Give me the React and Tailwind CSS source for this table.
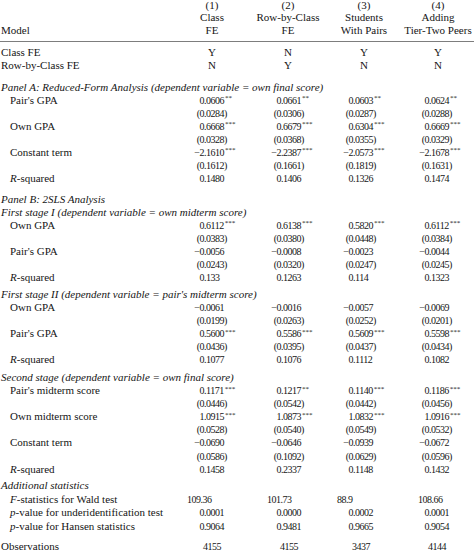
import React from "react";

const COLS = "grid grid-cols-[174px_76px_76px_76px_72px]";
const INT_W = ["w-[30px]", "w-[31px]", "w-[27px]", "w-[27px]"];
const F_PL = ["pl-[13px]", "pl-[17px]", "pl-[11px]", "pl-[16px]"];
const OBS_PL = ["pl-[29px]", "pl-[30px]", "pl-[26px]", "pl-[26px]"];

const R2 = (
  <>
    <i>R</i>-squared
  </>
);

// kind: fe = Y/N centred, num = decimal aligned, f = left padded, obs = integer
const rows = [
  { kind: "fe", label: "Class FE", vals: ["Y", "N", "Y", "Y"], top: true },
  { kind: "fe", label: "Row-by-Class FE", vals: ["N", "Y", "N", "N"], top: true },
  { sec: "Panel A: Reduced-Form Analysis (dependent variable = own final score)", mt: "mt-[8.2px]" },
  { label: "Pair's GPA", vals: ["0.0606**", "0.0661**", "0.0603**", "0.0624**"] },
  { vals: ["(0.0284)", "(0.0306)", "(0.0287)", "(0.0288)"] },
  { label: "Own GPA", vals: ["0.6668***", "0.6679***", "0.6304***", "0.6669***"] },
  { vals: ["(0.0328)", "(0.0368)", "(0.0355)", "(0.0329)"] },
  { label: "Constant term", vals: ["−2.1610***", "−2.2387***", "−2.0573***", "−2.1678***"] },
  { vals: ["(0.1612)", "(0.1661)", "(0.1819)", "(0.1631)"] },
  { label: R2, vals: ["0.1480", "0.1406", "0.1326", "0.1474"] },
  { sec: "Panel B: 2SLS Analysis", mt: "mt-[7.5px]" },
  { sec: "First stage I (dependent variable = own midterm score)" },
  { label: "Own GPA", vals: ["0.6112***", "0.6138***", "0.5820***", "0.6112***"] },
  { vals: ["(0.0383)", "(0.0380)", "(0.0448)", "(0.0384)"] },
  { label: "Pair's GPA", vals: ["−0.0056", "−0.0008", "−0.0023", "−0.0044"] },
  { vals: ["(0.0243)", "(0.0320)", "(0.0247)", "(0.0245)"] },
  { label: R2, vals: ["0.133", "0.1263", "0.114", "0.1323"] },
  { sec: "First stage II (dependent variable = pair's midterm score)", mt: "mt-[3.3px]" },
  { label: "Own GPA", vals: ["−0.0061", "−0.0016", "−0.0057", "−0.0069"] },
  { vals: ["(0.0199)", "(0.0263)", "(0.0252)", "(0.0201)"] },
  { label: "Pair's GPA", vals: ["0.5600***", "0.5586***", "0.5609***", "0.5598***"] },
  { vals: ["(0.0436)", "(0.0395)", "(0.0437)", "(0.0434)"] },
  { label: R2, vals: ["0.1077", "0.1076", "0.1112", "0.1082"] },
  { sec: "Second stage (dependent variable = own final score)", mt: "mt-[4.7px]" },
  { label: "Pair's midterm score", vals: ["0.1171***", "0.1217**", "0.1140***", "0.1186***"] },
  { vals: ["(0.0446)", "(0.0542)", "(0.0442)", "(0.0456)"] },
  { label: "Own midterm score", vals: ["1.0915***", "1.0873***", "1.0832***", "1.0916***"] },
  { vals: ["(0.0528)", "(0.0540)", "(0.0549)", "(0.0532)"] },
  { label: "Constant term", vals: ["−0.0690", "−0.0646", "−0.0939", "−0.0672"] },
  { vals: ["(0.0586)", "(0.1092)", "(0.0629)", "(0.0596)"] },
  { label: R2, vals: ["0.1458", "0.2337", "0.1148", "0.1432"] },
  { sec: "Additional statistics", mt: "mt-[3px]" },
  {
    kind: "f",
    mt: "mt-[1.5px]",
    label: (
      <>
        <i>F</i>-statistics for Wald test
      </>
    ),
    vals: ["109.36", "101.73", "88.9", "108.66"],
  },
  {
    label: (
      <>
        <i>p</i>-value for underidentification test
      </>
    ),
    vals: ["0.0001", "0.0000", "0.0002", "0.0001"],
  },
  {
    label: (
      <>
        <i>p</i>-value for Hansen statistics
      </>
    ),
    vals: ["0.9064", "0.9481", "0.9665", "0.9054"],
  },
  { kind: "obs", top: true, mt: "mt-[7px]", label: "Observations", vals: ["4155", "4155", "3437", "4144"] },
];

const headers = [
  ["(1)", "Class", "FE"],
  ["(2)", "Row-by-Class", "FE"],
  ["(3)", "Students", "With Pairs"],
  ["(4)", "Adding", "Tier-Two Peers"],
];

function Num({ v, col }) {
  const m = v.match(/^(.*?)(\*+)?$/);
  const body = m[1];
  const stars = m[2];
  const i = body.indexOf(".");
  return (
    <div className="flex whitespace-nowrap font-['Liberation_Serif',serif] text-[10px] tracking-[-0.05em]">
      <span className={`${INT_W[col]} shrink-0 text-right`}>{body.slice(0, i)}</span>
      <span>
        {body.slice(i)}
        {stars && <sup className="ml-px text-[7px] tracking-normal">{stars}</sup>}
      </span>
    </div>
  );
}

function Cell({ kind, v, col }) {
  if (kind === "fe") return <div className="text-center">{v}</div>;
  if (kind === "f" || kind === "obs") {
    const pl = kind === "f" ? F_PL[col] : OBS_PL[col];
    return (
      <div className={`${pl} whitespace-nowrap font-['Liberation_Serif',serif] text-[10px] tracking-[-0.05em]`}>
        {v}
      </div>
    );
  }
  return <Num v={v} col={col} />;
}

export default function App() {
  return (
    <div className="h-[552px] w-[474px] overflow-hidden bg-white font-['Liberation_Serif',serif] text-[11px] text-[#151515]">
      {/* column headings */}
      <div className={`${COLS} -mt-[1.5px] leading-[12.8px]`}>
        <div className="flex flex-col justify-end pl-px">Model</div>
        {headers.map((h) => (
          <div key={h[0]} className="flex flex-col items-center whitespace-nowrap">
            {h.map((t) => (
              <span key={t}>{t}</span>
            ))}
          </div>
        ))}
      </div>
      <div className="mt-[4px] border-t-[1.5px] border-[#7d7d7d]" />

      <div className="mt-[4.25px] leading-[13.1px]">
        {rows.map((r, idx) =>
          r.sec ? (
            <div key={idx} className={`${r.mt || ""} whitespace-nowrap pl-px italic`}>
              {r.sec}
            </div>
          ) : (
            <div key={idx} className={`${COLS} ${r.mt || ""}`}>
              <div className={`${r.top ? "pl-px" : "pl-[10px]"} whitespace-nowrap`}>{r.label}</div>
              {r.vals.map((v, c) => (
                <Cell key={c} kind={r.kind} v={v} col={c} />
              ))}
            </div>
          )
        )}
      </div>
    </div>
  );
}
